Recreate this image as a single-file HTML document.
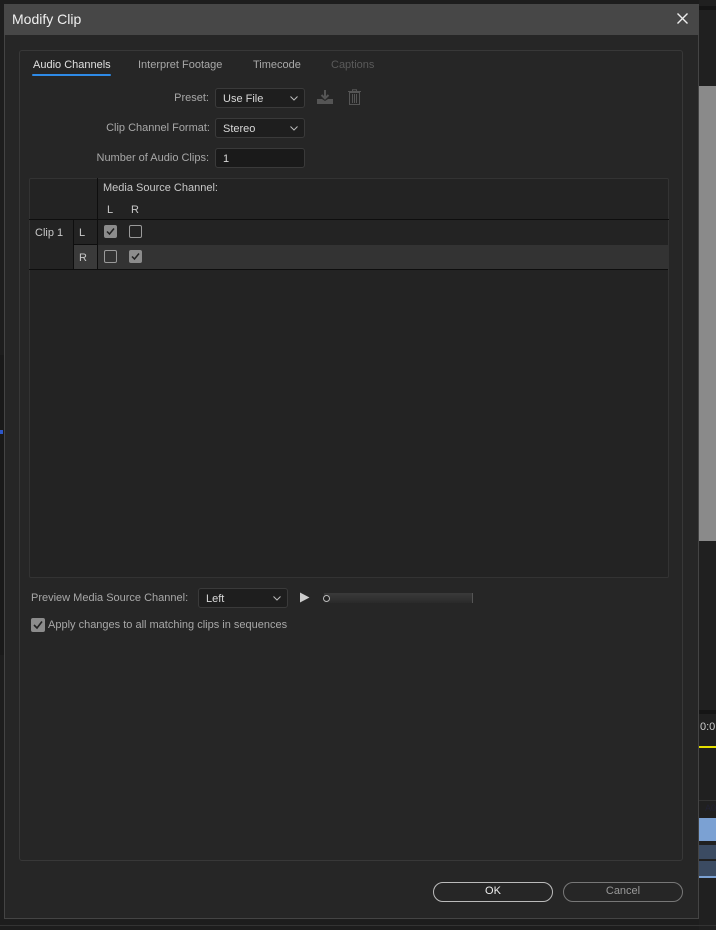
<!DOCTYPE html>
<html><head><meta charset="utf-8"><style>
*{margin:0;padding:0;box-sizing:border-box}
body{width:716px;height:930px;background:#1d1d1d;position:relative;overflow:hidden;font-family:"Liberation Sans","DejaVu Sans",sans-serif;font-size:11px;color:#b8b8b8}
.a{position:absolute}
.lbl{position:absolute;text-align:right;color:#a8a8a8;white-space:nowrap}
.sel{position:absolute;background:#1e1e1e;border:1px solid #3a3a3a;border-radius:3px;color:#d8d8d8;padding:4px 0 0 7px;height:20px}
.sel svg{position:absolute;right:6px;top:7px}
.cb{position:absolute;width:13px;height:13px;border:1.5px solid #9a9a9a;border-radius:2px}
.cbc{position:absolute;width:13px;height:13px;background:#8c8c8c;border-radius:2px}
.cbc svg{position:absolute;left:2px;top:2px}
</style></head><body>
<div class="a" style="left:699px;top:0;width:17px;height:930px;background:#202020"></div>
<div class="a" style="left:699px;top:6px;width:17px;height:4px;background:#151515"></div>
<div class="a" style="left:699px;top:86px;width:17px;height:455px;background:#8a8a8a"></div>
<div class="a" style="left:699px;top:710px;width:17px;height:4px;background:#151515"></div>
<div class="a" style="left:700px;top:721px;color:#ccc;font-size:11px">0:0</div>
<div class="a" style="left:699px;top:746px;width:17px;height:2px;background:#e5e000"></div>
<div class="a" style="left:699px;top:800px;width:17px;height:1px;background:#333"></div>
<div class="a" style="left:699px;top:818px;width:17px;height:23px;background:#7ba1d3"></div>
<div class="a" style="left:705px;top:803px;color:#223;font-size:9px">A0</div>
<div class="a" style="left:699px;top:845px;width:17px;height:14px;background:#3b4b62"></div>
<div class="a" style="left:699px;top:861px;width:17px;height:15px;background:#3b4b62"></div>
<div class="a" style="left:699px;top:876px;width:17px;height:2px;background:#7ba1d3"></div>
<div class="a" style="left:0;top:925px;width:716px;height:1px;background:#333"></div>
<div class="a" style="left:0;top:355px;width:4px;height:300px;background:#191919"></div>
<div class="a" style="left:0;top:430px;width:3px;height:4px;background:#2d56c8"></div>

<div class="a" style="left:4px;top:4px;width:695px;height:915px;background:#262626;border:1px solid #444"></div>
<div class="a" style="left:4px;top:4px;width:695px;height:31px;background:#474747"></div>
<div class="a" style="left:12px;top:11px;font-size:14px;color:#f0f0f0">Modify Clip</div>
<svg class="a" style="left:677px;top:13px" width="11" height="11"><path d="M0.5 0.5L10.5 10.5M10.5 0.5L0.5 10.5" stroke="#eee" stroke-width="1.4"/></svg>

<div class="a" style="left:19px;top:50px;width:664px;height:811px;border:1px solid #383838;border-radius:3px"></div>

<div class="a" style="left:33px;top:59px;color:#e0e0e0">Audio Channels</div>
<div class="a" style="left:32px;top:74px;width:79px;height:2px;background:#2e8ae6;border-radius:1px"></div>
<div class="a" style="left:138px;top:59px;color:#a8a8a8">Interpret Footage</div>
<div class="a" style="left:253px;top:59px;color:#a8a8a8">Timecode</div>
<div class="a" style="left:331px;top:59px;color:#5a5a5a">Captions</div>

<div class="lbl" style="right:507px;top:92px">Preset:</div>
<div class="sel" style="left:215px;top:88px;width:90px">Use File<svg width="8" height="5"><path d="M0.5 0.5L4 4L7.5 0.5" stroke="#bbb" fill="none"/></svg></div>
<svg class="a" style="left:316px;top:89px" width="18" height="16"><path d="M9 1V9M5.5 6L9 9.5L12.5 6" stroke="#555" stroke-width="2" fill="none"/><path d="M1 10H6L9 12L12 10H17V15H1Z" fill="#555"/></svg>
<svg class="a" style="left:348px;top:89px" width="13" height="16"><path d="M0 2.5H13M4.5 2.5V0.8H8.5V2.5M1.5 3.5H11.5V15.5H1.5Z M4.5 5V14M6.5 5V14M8.5 5V14" stroke="#555" stroke-width="1" fill="none"/></svg>

<div class="lbl" style="right:506px;top:122px">Clip Channel Format:</div>
<div class="sel" style="left:215px;top:118px;width:90px">Stereo<svg width="8" height="5"><path d="M0.5 0.5L4 4L7.5 0.5" stroke="#bbb" fill="none"/></svg></div>

<div class="lbl" style="right:507px;top:152px">Number of Audio Clips:</div>
<div class="sel" style="left:215px;top:148px;width:90px;background:#1a1a1a">1</div>

<div class="a" style="left:29px;top:178px;width:640px;height:400px;background:#232323;border:1px solid #333;border-radius:2px"></div>
<div class="a" style="left:103px;top:182px;color:#c8c8c8">Media Source Channel:</div>
<div class="a" style="left:107px;top:204px;color:#c8c8c8">L</div>
<div class="a" style="left:131px;top:204px;color:#c8c8c8">R</div>
<div class="a" style="left:29px;top:219px;width:640px;height:1px;background:#0e0e0e"></div>
<div class="a" style="left:97px;top:245px;width:571px;height:24px;background:#333"></div>
<div class="a" style="left:74px;top:245px;width:23px;height:24px;background:#3a3a3a"></div>
<div class="a" style="left:97px;top:178px;width:1px;height:92px;background:#0e0e0e"></div>
<div class="a" style="left:73px;top:220px;width:1px;height:50px;background:#0e0e0e"></div>
<div class="a" style="left:74px;top:244px;width:23px;height:1px;background:#0e0e0e"></div>
<div class="a" style="left:29px;top:269px;width:639px;height:1px;background:#0e0e0e"></div>
<div class="a" style="left:35px;top:227px;color:#c8c8c8">Clip 1</div>
<div class="a" style="left:79px;top:227px;color:#c8c8c8">L</div>
<div class="a" style="left:79px;top:252px;color:#c8c8c8">R</div>
<div class="cbc" style="left:104px;top:225px"><svg width="9" height="9"><path d="M1 4.5L3.5 7L8 1.5" stroke="#222" stroke-width="1.5" fill="none"/></svg></div>
<div class="cb" style="left:129px;top:225px"></div>
<div class="cb" style="left:104px;top:250px"></div>
<div class="cbc" style="left:129px;top:250px"><svg width="9" height="9"><path d="M1 4.5L3.5 7L8 1.5" stroke="#222" stroke-width="1.5" fill="none"/></svg></div>

<div class="a" style="left:31px;top:592px;color:#a8a8a8">Preview Media Source Channel:</div>
<div class="sel" style="left:198px;top:588px;width:90px">Left<svg width="8" height="5"><path d="M0.5 0.5L4 4L7.5 0.5" stroke="#bbb" fill="none"/></svg></div>
<svg class="a" style="left:299px;top:592px" width="11" height="11"><path d="M1 0.5L10.5 5.5L1 10.5Z" fill="#ccc"/></svg>
<div class="a" style="left:324px;top:593px;width:149px;height:10px;background:linear-gradient(#3a3a3a,#2a2a2a);border-right:1px solid #555"></div>
<div class="a" style="left:323px;top:595px;width:7px;height:7px;border:1.5px solid #bbb;border-radius:50%;background:#222"></div>

<div class="cbc" style="left:31px;top:618px;width:14px;height:14px"><svg width="10" height="10"><path d="M1 5L4 8L9 1.5" stroke="#222" stroke-width="1.6" fill="none"/></svg></div>
<div class="a" style="left:48px;top:619px;color:#a8a8a8">Apply changes to all matching clips in sequences</div>

<div class="a" style="left:433px;top:882px;width:120px;height:20px;border:1.5px solid #bbb;border-radius:10px;color:#eee;text-align:center;line-height:17px">OK</div>
<div class="a" style="left:563px;top:882px;width:120px;height:20px;border:1.5px solid #777;border-radius:10px;color:#999;text-align:center;line-height:17px">Cancel</div>
</body></html>
